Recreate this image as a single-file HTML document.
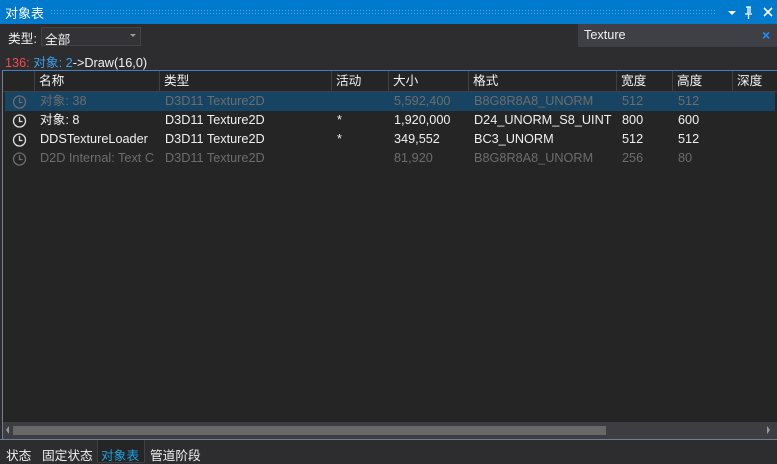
<!DOCTYPE html>
<html><head><meta charset="utf-8"><style>
*{margin:0;padding:0;box-sizing:border-box}
body{width:777px;height:463px;background:#2d2d30;font-family:"Liberation Sans","Noto Sans CJK SC",sans-serif;font-size:12.7px;color:#f1f1f1;position:relative;overflow:hidden}
.abs{position:absolute;white-space:nowrap}
.title{left:0;top:0;width:777px;height:24px;background:#007acc}
.dots{left:50px;top:9px;width:666px;height:6px;background-image:radial-gradient(#4da3dd 0.7px,transparent 0.8px);background-size:3px 3px}
.list{left:2px;top:70px;width:775px;height:370px;background:#252526;border:1px solid #6b7f99;border-right:none;border-top-color:#3f7fbf}
.hdr{top:71px;height:20px;line-height:20px;color:#f1f1f1}
.sep{top:71px;width:1px;height:20px;background:#3f3f46}
.row{height:19px;line-height:19px}
.dim{color:#6d6d6d}
</style></head><body>
<div class="abs title"></div>
<div class="abs" style="left:5px;top:3px;font-size:13px;color:#fff">对象表</div>
<div class="abs dots"></div>
<svg class="abs" style="left:726px;top:6px" width="50" height="14"><path d="M2 5h8l-4 4z" fill="#fff"/><path d="M22 1v7M20 1h5M24 1v6M19 8h7M22.5 8v5" stroke="#fff" stroke-width="1.3" fill="none"/><path d="M38 2l8 8M46 2l-8 8" stroke="#fff" stroke-width="1.6"/></svg>
<div class="abs" style="left:8px;top:28px;color:#f1f1f1">类型:</div>
<div class="abs" style="left:41px;top:27px;width:100px;height:19px;background:#333337;border:1px solid #434346"></div>
<div class="abs" style="left:45px;top:29px">全部</div>
<svg class="abs" style="left:130px;top:34px" width="8" height="5"><path d="M0 0h6l-3 3z" fill="#999"/></svg>
<div class="abs" style="left:578px;top:24px;width:199px;height:23px;background:#3f3f46"></div>
<div class="abs" style="left:584px;top:28px">Texture</div>
<div class="abs" style="left:762px;top:27px;color:#1e90ff;font-size:14px;font-weight:bold">×</div>
<div class="abs" style="left:5px;top:52px"><span style="color:#f14c4c">136:</span> <span style="color:#3c9ee8">对象: 2</span>-&gt;Draw(16,0)</div>
<div class="abs list"></div>
<div class="abs" style="left:3px;top:91px;width:774px;height:1px;background:#3f3f46"></div>
<div class="abs hdr" style="left:39px">名称</div>
<div class="abs hdr" style="left:164px">类型</div>
<div class="abs hdr" style="left:336px">活动</div>
<div class="abs hdr" style="left:393px">大小</div>
<div class="abs hdr" style="left:473px">格式</div>
<div class="abs hdr" style="left:621px">宽度</div>
<div class="abs hdr" style="left:677px">高度</div>
<div class="abs hdr" style="left:737px">深度</div>
<div class="abs sep" style="left:34px"></div><div class="abs sep" style="left:159px"></div><div class="abs sep" style="left:331px"></div><div class="abs sep" style="left:388px"></div><div class="abs sep" style="left:468px"></div><div class="abs sep" style="left:616px"></div><div class="abs sep" style="left:672px"></div><div class="abs sep" style="left:732px"></div>
<div class="abs" style="left:5px;top:92px;width:770px;height:19px;background:#174462"></div>
<svg class="abs" style="left:11px;top:94px" width="16" height="72">
<g fill="none" stroke-width="1.3"><g stroke="#6d6d6d"><circle cx="8.5" cy="8" r="6"/><path d="M8.5 4v4.5h3"/></g>
<g stroke="#e0e0e0" transform="translate(0,19)"><circle cx="8.5" cy="8" r="6"/><path d="M8.5 4v4.5h3"/></g>
<g stroke="#e0e0e0" transform="translate(0,38)"><circle cx="8.5" cy="8" r="6"/><path d="M8.5 4v4.5h3"/></g>
<g stroke="#6d6d6d" transform="translate(0,57)"><circle cx="8.5" cy="8" r="6"/><path d="M8.5 4v4.5h3"/></g></g></svg>
<div class="abs row dim" style="top:92px;left:40px">对象: 38</div>
<div class="abs row dim" style="top:92px;left:165px">D3D11 Texture2D</div>
<div class="abs row dim" style="top:92px;left:394px">5,592,400</div>
<div class="abs row dim" style="top:92px;left:474px">B8G8R8A8_UNORM</div>
<div class="abs row dim" style="top:92px;left:622px">512</div>
<div class="abs row dim" style="top:92px;left:678px">512</div>
<div class="abs row" style="top:111px;left:40px">对象: 8</div>
<div class="abs row" style="top:111px;left:165px">D3D11 Texture2D</div>
<div class="abs row" style="top:111px;left:337px">*</div>
<div class="abs row" style="top:111px;left:394px">1,920,000</div>
<div class="abs row" style="top:111px;left:474px">D24_UNORM_S8_UINT</div>
<div class="abs row" style="top:111px;left:622px">800</div>
<div class="abs row" style="top:111px;left:678px">600</div>
<div class="abs row" style="top:130px;left:40px">DDSTextureLoader</div>
<div class="abs row" style="top:130px;left:165px">D3D11 Texture2D</div>
<div class="abs row" style="top:130px;left:337px">*</div>
<div class="abs row" style="top:130px;left:394px">349,552</div>
<div class="abs row" style="top:130px;left:474px">BC3_UNORM</div>
<div class="abs row" style="top:130px;left:622px">512</div>
<div class="abs row" style="top:130px;left:678px">512</div>
<div class="abs row dim" style="top:149px;left:40px;width:114px;overflow:hidden">D2D Internal: Text Cache</div>
<div class="abs row dim" style="top:149px;left:165px">D3D11 Texture2D</div>
<div class="abs row dim" style="top:149px;left:394px">81,920</div>
<div class="abs row dim" style="top:149px;left:474px">B8G8R8A8_UNORM</div>
<div class="abs row dim" style="top:149px;left:622px">256</div>
<div class="abs row dim" style="top:149px;left:678px">80</div>
<div class="abs" style="left:3px;top:422px;width:774px;height:17px;background:#3e3e42"></div>
<div class="abs" style="left:13px;top:426px;width:593px;height:9px;background:#686868"></div>
<svg class="abs" style="left:5px;top:425px" width="6" height="10"><path d="M4 1v8L1 5z" fill="#999"/></svg>
<svg class="abs" style="left:766px;top:425px" width="6" height="10"><path d="M1 1v8l3-4z" fill="#999"/></svg>
<div class="abs" style="left:0;top:439px;width:777px;height:1px;background:#6b7f99"></div>
<div class="abs" style="left:97px;top:440px;width:48px;height:23px;background:#252526;border:1px solid #3f3f46;border-top:none"></div>
<div class="abs" style="left:6px;top:445px">状态</div>
<div class="abs" style="left:42px;top:445px">固定状态</div>
<div class="abs" style="left:101px;top:445px;color:#1ba1e2">对象表</div>
<div class="abs" style="left:150px;top:445px">管道阶段</div>
</body></html>
